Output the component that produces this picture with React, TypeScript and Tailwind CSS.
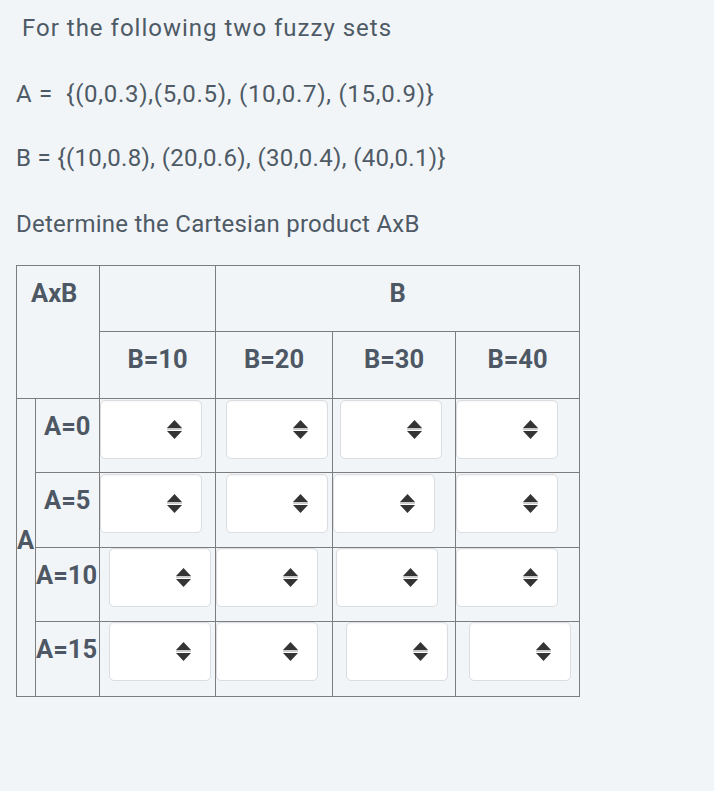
const cols = ['B=10', 'B=20', 'B=30', 'B=40'];

const rows = [
  { label: 'A=0', labelPad: 'pl-[8px]', top: 'mt-[1px]', boxes: ['ml-0', 'ml-[10px]', 'ml-[7px]', 'ml-0'] },
  { label: 'A=5', labelPad: 'pl-[8px]', top: 'mt-[1px]', boxes: ['ml-0', 'ml-[10px]', 'ml-0', 'ml-0'] },
  { label: 'A=10', labelPad: 'pl-0', top: 'mt-0', boxes: ['ml-[9px]', 'ml-0', 'ml-[3px]', 'ml-0'] },
  { label: 'A=15', labelPad: 'pl-0', top: 'mt-0', boxes: ['ml-[9px]', 'ml-0', 'ml-[13px]', 'ml-[13px]'] },
];

const rowHeights = ['h-[74px]', 'h-[75px]', 'h-[74px]', 'h-[75px]'];

function SortIcon() {
  return (
    <svg width="15" height="19" viewBox="0 0 15 19">
      <path d="M7.5 0 L15 8 L0 8 Z" fill="#343434" />
      <rect x="0" y="8.5" width="15" height="1" fill="#9a9a9a" />
      <path d="M0 11 L15 11 L7.5 19 Z" fill="#343434" />
    </svg>
  );
}

function SelectBox({ offset, top }: { offset: string; top: string }) {
  return (
    <div
      className={`${offset} ${top} flex h-[59px] w-[102px] items-center justify-end rounded-[5px] border border-[#dadde1] bg-white pr-[19px] shadow-[inset_0_1px_2px_rgba(0,0,0,0.04)]`}
    >
      <SortIcon />
    </div>
  );
}

export default function App() {
  return (
    <div className="h-[791px] w-full bg-[#f2f5f8] pl-[16px] font-['Roboto',sans-serif] text-[24px] text-[#4e5a65]">
      <p className="pt-[15px] pl-[6px] leading-[26px] tracking-[1px]">For the following two fuzzy sets</p>
      <p className="mt-[40px] leading-[26px] tracking-[0.72px]">A =&nbsp; {'{(0,0.3),(5,0.5), (10,0.7), (15,0.9)}'}</p>
      <p className="mt-[38px] leading-[26px] tracking-[0.35px]">B = {'{(10,0.8), (20,0.6), (30,0.4), (40,0.1)}'}</p>
      <p className="mt-[40px] leading-[26px] tracking-[0.25px]">Determine the Cartesian product AxB</p>

      <table className="mt-[28px] w-[563px] table-fixed border-collapse text-[25.5px] font-bold leading-[30px] text-[#4d5864]">
        <colgroup>
          <col className="w-[19px]" />
          <col className="w-[64px]" />
          <col className="w-[116px]" />
          <col className="w-[117px]" />
          <col className="w-[123px]" />
          <col className="w-[124px]" />
        </colgroup>
        <tbody>
          <tr className="h-[66px]">
            <td colSpan={2} rowSpan={2} className="border border-[#7d7d7d] pl-[14px] pt-[12px] align-top">
              AxB
            </td>
            <td className="border border-[#7d7d7d]" />
            <td colSpan={3} className="border border-[#7d7d7d] pt-[12px] text-center align-top">
              B
            </td>
          </tr>
          <tr className="h-[67px]">
            {cols.map((c) => (
              <td key={c} className="border border-[#7d7d7d] pt-[12px] text-center align-top">
                {c}
              </td>
            ))}
          </tr>
          {rows.map((row, i) => (
            <tr key={row.label} className={rowHeights[i]}>
              {i === 0 && (
                <td rowSpan={4} className="overflow-hidden border border-[#7d7d7d] p-0 align-top">
                  <div className="pt-[126px]">A</div>
                </td>
              )}
              <td className={`border border-[#7d7d7d] ${row.labelPad} pt-[12px] align-top whitespace-nowrap`}>
                {row.label}
              </td>
              {row.boxes.map((offset, j) => (
                <td key={j} className="border border-[#7d7d7d] p-0 align-top">
                  <SelectBox offset={offset} top={row.top} />
                </td>
              ))}
            </tr>
          ))}
        </tbody>
      </table>
    </div>
  );
}
